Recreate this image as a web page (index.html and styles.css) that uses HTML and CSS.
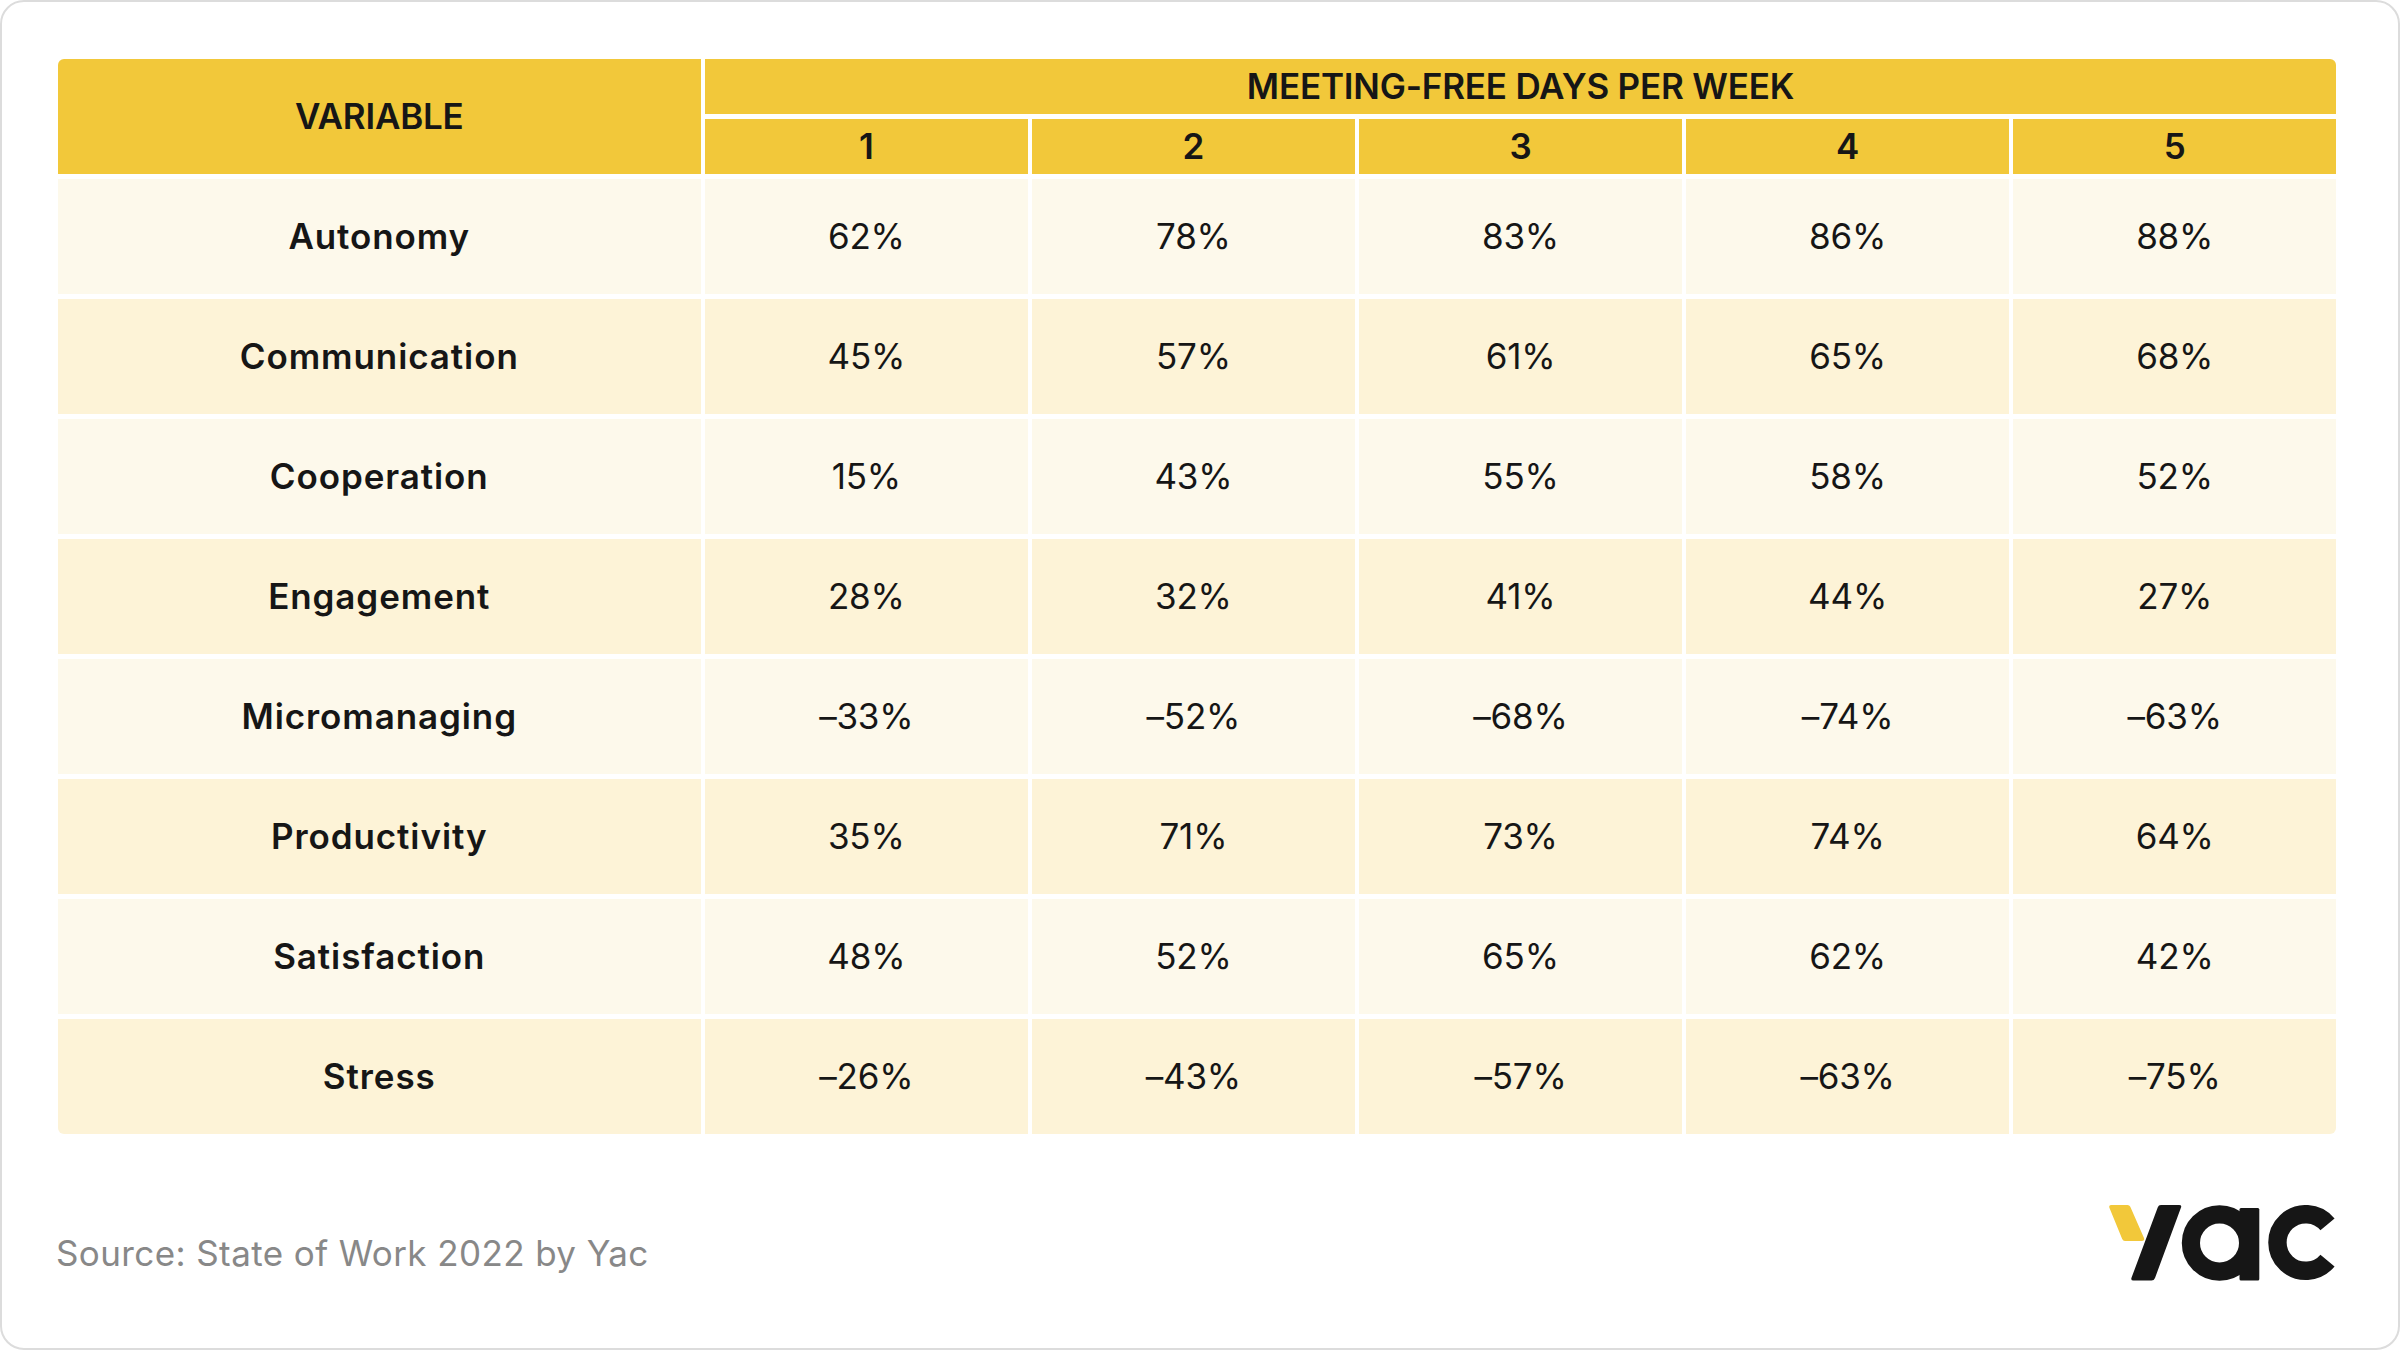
FILE: index.html
```html
<!DOCTYPE html>
<html lang="en">
<head>
<meta charset="utf-8">
<title>Meeting-free days per week</title>
<link rel="stylesheet" href="styles.css">
</head>
<body>
<div class="card">
  <div class="table">
    <div class="cell head var-head">VARIABLE</div>
    <div class="cell head group-head">MEETING-FREE DAYS PER WEEK</div>
    <div class="cell head">1</div>
    <div class="cell head">2</div>
    <div class="cell head">3</div>
    <div class="cell head">4</div>
    <div class="cell head">5</div>

    <div class="cell label odd">Autonomy</div>
    <div class="cell odd">62%</div><div class="cell odd">78%</div><div class="cell odd">83%</div><div class="cell odd">86%</div><div class="cell odd">88%</div>

    <div class="cell label even">Communication</div>
    <div class="cell even">45%</div><div class="cell even">57%</div><div class="cell even">61%</div><div class="cell even">65%</div><div class="cell even">68%</div>

    <div class="cell label odd">Cooperation</div>
    <div class="cell odd">15%</div><div class="cell odd">43%</div><div class="cell odd">55%</div><div class="cell odd">58%</div><div class="cell odd">52%</div>

    <div class="cell label even">Engagement</div>
    <div class="cell even">28%</div><div class="cell even">32%</div><div class="cell even">41%</div><div class="cell even">44%</div><div class="cell even">27%</div>

    <div class="cell label odd">Micromanaging</div>
    <div class="cell odd">–33%</div><div class="cell odd">–52%</div><div class="cell odd">–68%</div><div class="cell odd">–74%</div><div class="cell odd">–63%</div>

    <div class="cell label even">Productivity</div>
    <div class="cell even">35%</div><div class="cell even">71%</div><div class="cell even">73%</div><div class="cell even">74%</div><div class="cell even">64%</div>

    <div class="cell label odd">Satisfaction</div>
    <div class="cell odd">48%</div><div class="cell odd">52%</div><div class="cell odd">65%</div><div class="cell odd">62%</div><div class="cell odd">42%</div>

    <div class="cell label even">Stress</div>
    <div class="cell even">–26%</div><div class="cell even">–43%</div><div class="cell even">–57%</div><div class="cell even">–63%</div><div class="cell even">–75%</div>
  </div>

  <div class="footer">
    <div class="source">Source: State of Work 2022 by Yac</div>
    <svg class="logo" viewBox="0 0 228 76" width="228" height="76" aria-label="yac">
      <path d="M2 0 H18.5 Q20.5 0 21.3 1.8 L35 33 Q36 36 33 36 H16 Q14 36 13.2 34 L0.5 3 Q-0.5 0 2 0 Z" fill="#F2C83A"/>
      <path d="M52 0 H70 Q73 0 72 2.6 L46 73 Q45 75.5 42.5 75.5 H24.5 Q21.5 75.5 22.5 72.8 L48.8 2.2 Q49.6 0 52 0 Z" fill="#161616"/>
      <circle cx="110.5" cy="38" r="28.6" fill="none" stroke="#161616" stroke-width="18.2"/>
      <rect x="130.5" y="3" width="19.8" height="72.5" rx="1.5" fill="#161616"/>
      <path d="M218.5 19.4 A28.3 28.3 0 1 0 218.5 55.6" fill="none" stroke="#161616" stroke-width="18.4"/>
    </svg>
  </div>
</div>
</body>
</html>
```

FILE: styles.css
```css
html, body {
  margin: 0;
  padding: 0;
  background: #ffffff;
}

body {
  font-family: "Inter", "Noto Sans", "DejaVu Sans", sans-serif;
  color: #161616;
}

.card {
  box-sizing: border-box;
  width: 2400px;
  height: 1350px;
  border: 2px solid #dcdcdc;
  border-radius: 24px;
  background: #ffffff;
  padding: 56.5px 62px 0 56px;
  display: flex;
  flex-direction: column;
}

.table {
  display: grid;
  grid-template-columns: 642.5px repeat(5, 1fr);
  grid-template-rows: 55.5px 55.5px repeat(8, 115.5px);
  gap: 4.5px;
  border-radius: 6px;
  overflow: hidden;
}

.cell {
  display: flex;
  align-items: center;
  justify-content: center;
  font-size: 35px;
  font-weight: 400;
  letter-spacing: -0.2px;
  line-height: 1;
}

.head {
  background: #F2C83A;
  font-weight: 600;
}

.var-head {
  grid-row: 1 / span 2;
}

.group-head {
  grid-column: 2 / span 5;
}

.label {
  font-weight: 600;
  letter-spacing: 0.9px;
}

.odd {
  background: #FDF9EB;
}

.even {
  background: #FDF3D7;
}

.footer {
  display: flex;
  justify-content: space-between;
  align-items: center;
  margin-top: 71px;
  height: 76px;
}

.source {
  font-size: 35px;
  color: #888888;
  margin-top: 20px;
  margin-left: -2px;
  letter-spacing: 0.4px;
}

.logo {
  display: block;
  margin-right: -1px;
}
```
